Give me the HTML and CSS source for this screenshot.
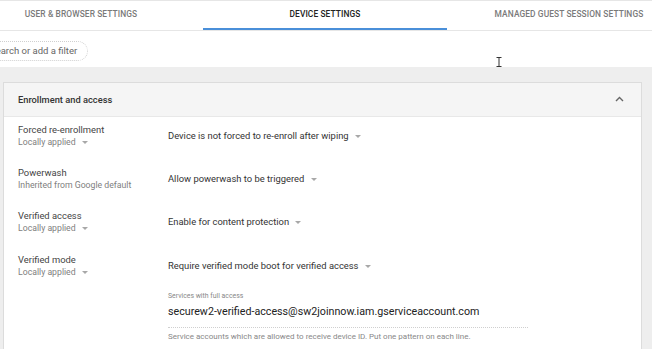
FILE: index.html
```html
<!DOCTYPE html>
<html>
<head>
<meta charset="utf-8">
<link rel="stylesheet" href="styles.css">
</head>
<body>
<div class="top">
  <div class="tabs">
    <div class="tab">USER &amp; BROWSER SETTINGS</div>
    <div class="tab active">DEVICE SETTINGS</div>
    <div class="tab">MANAGED GUEST SESSION SETTINGS</div>
  </div>
  <div class="filterbar">
    <div class="filter">Search or add a filter</div>
  </div>
  <svg class="cursor" width="6" height="10" viewBox="0 0 6 10"><path d="M0.5 0.5h5M0.5 9.5h5M3 0.5v9" stroke="#333" stroke-width="1" fill="none"/></svg>
</div>
<div class="main">
  <div class="card">
    <div class="card-head">
      <span>Enrollment and access</span>
      <svg class="chev" width="9" height="6" viewBox="0 0 9 6"><path d="M1 5L4.5 1.5L8 5" stroke="#666" stroke-width="1.4" fill="none"/></svg>
    </div>
    <div class="row">
      <div class="label"><div class="name">Forced re-enrollment</div><div class="sub">Locally applied <i class="caret"></i></div></div>
      <div class="value">Device is not forced to re-enroll after wiping <i class="caret"></i></div>
    </div>
    <div class="row">
      <div class="label"><div class="name">Powerwash</div><div class="sub">Inherited from Google default</div></div>
      <div class="value">Allow powerwash to be triggered <i class="caret"></i></div>
    </div>
    <div class="row">
      <div class="label"><div class="name">Verified access</div><div class="sub">Locally applied <i class="caret"></i></div></div>
      <div class="value">Enable for content protection <i class="caret"></i></div>
    </div>
    <div class="row">
      <div class="label"><div class="name">Verified mode</div><div class="sub">Locally applied <i class="caret"></i></div></div>
      <div class="value">Require verified mode boot for verified access <i class="caret"></i></div>
    </div>
    <div class="services">
      <div class="svc-label">Services with full access</div>
      <div class="svc-value">securew2-verified-access@sw2joinnow.iam.gserviceaccount.com</div>
      <div class="svc-help">Service accounts which are allowed to receive device ID. Put one pattern on each line.</div>
    </div>
  </div>
</div>
</body>
</html>
```
FILE: styles.css
```css
html, body {
  margin: 0;
  padding: 0;
}
body {
  background: #eeeeee;
  font-family: Roboto, "Noto Sans", sans-serif;
  width: 652px;
  height: 349px;
  overflow: hidden;
}
.top {
  background: #fff;
  height: 67px;
  position: relative;
  overflow: hidden;
}
.tabs {
  display: flex;
  margin-left: -41px;
  width: 732px;
  height: 29px;
  border-top: 1px solid #e6e6e6;
  border-bottom: 1px solid #e6e6e6;
}
.tab {
  width: 244px;
  flex: none;
  text-align: center;
  font-size: 8.4px;
  font-weight: 500;
  color: #7a7a7a;
  line-height: 27px;
  letter-spacing: 0.1px;
  box-sizing: border-box;
  border-bottom: 2px solid transparent;
}
.tab.active {
  color: #222;
  border-bottom-color: #4a8fd9;
}
.filterbar {
  padding-top: 8px;
}
.filter {
  display: inline-block;
  margin-left: -24px;
  height: 18px;
  line-height: 18px;
  padding: 0 10px 0 13px;
  border: 1px dotted #d0d0d0;
  border-radius: 10px;
  font-size: 9.5px;
  color: #666;
}
.cursor {
  position: absolute;
  left: 496px;
  top: 57px;
}
.main {
  padding: 15px 0 0 3px;
  height: 267px;
  overflow: hidden;
}
.card {
  background: #fff;
  border: 1px solid #dcdcdc;
  width: 637px;
  height: 300px;
}
.card-head {
  height: 34px;
  background: #f5f5f5;
  border-bottom: 1px solid #e8e8e8;
  display: flex;
  align-items: center;
  justify-content: space-between;
  padding: 0 16px 1px 14px;
  box-sizing: border-box;
  font-size: 9.3px;
  font-weight: 500;
  color: #333;
}
.chev {
  margin-right: 1px;
}
.row {
  display: flex;
  align-items: center;
  height: 43.3px;
  padding-left: 14px;
  box-sizing: border-box;
  padding-bottom: 5px;
}
.label {
  width: 150px;
  flex: none;
  margin-top: -1px;
}
.name {
  font-size: 9.4px;
  line-height: 13px;
  color: #444;
}
.sub {
  font-size: 8.7px;
  line-height: 13px;
  color: #808080;
}
.value {
  font-size: 9.4px;
  color: #333;
  margin-top: -2px;
}
.caret {
  display: inline-block;
  width: 0;
  height: 0;
  border-left: 3.5px solid transparent;
  border-right: 3.5px solid transparent;
  border-top: 3.5px solid #a8a8a8;
  margin-left: 4px;
  vertical-align: middle;
}
.services {
  padding-left: 164px;
  padding-top: 1px;
}
.svc-label {
  font-size: 6.9px;
  color: #888;
  line-height: 10px;
}
.svc-value {
  font-size: 10.7px;
  color: #222;
  line-height: 22px;
  width: 360px;
  border-bottom: 1px dotted #cfcfcf;
  padding-bottom: 4px;
}
.svc-help {
  font-size: 8px;
  color: #888;
  line-height: 18px;
}
```
